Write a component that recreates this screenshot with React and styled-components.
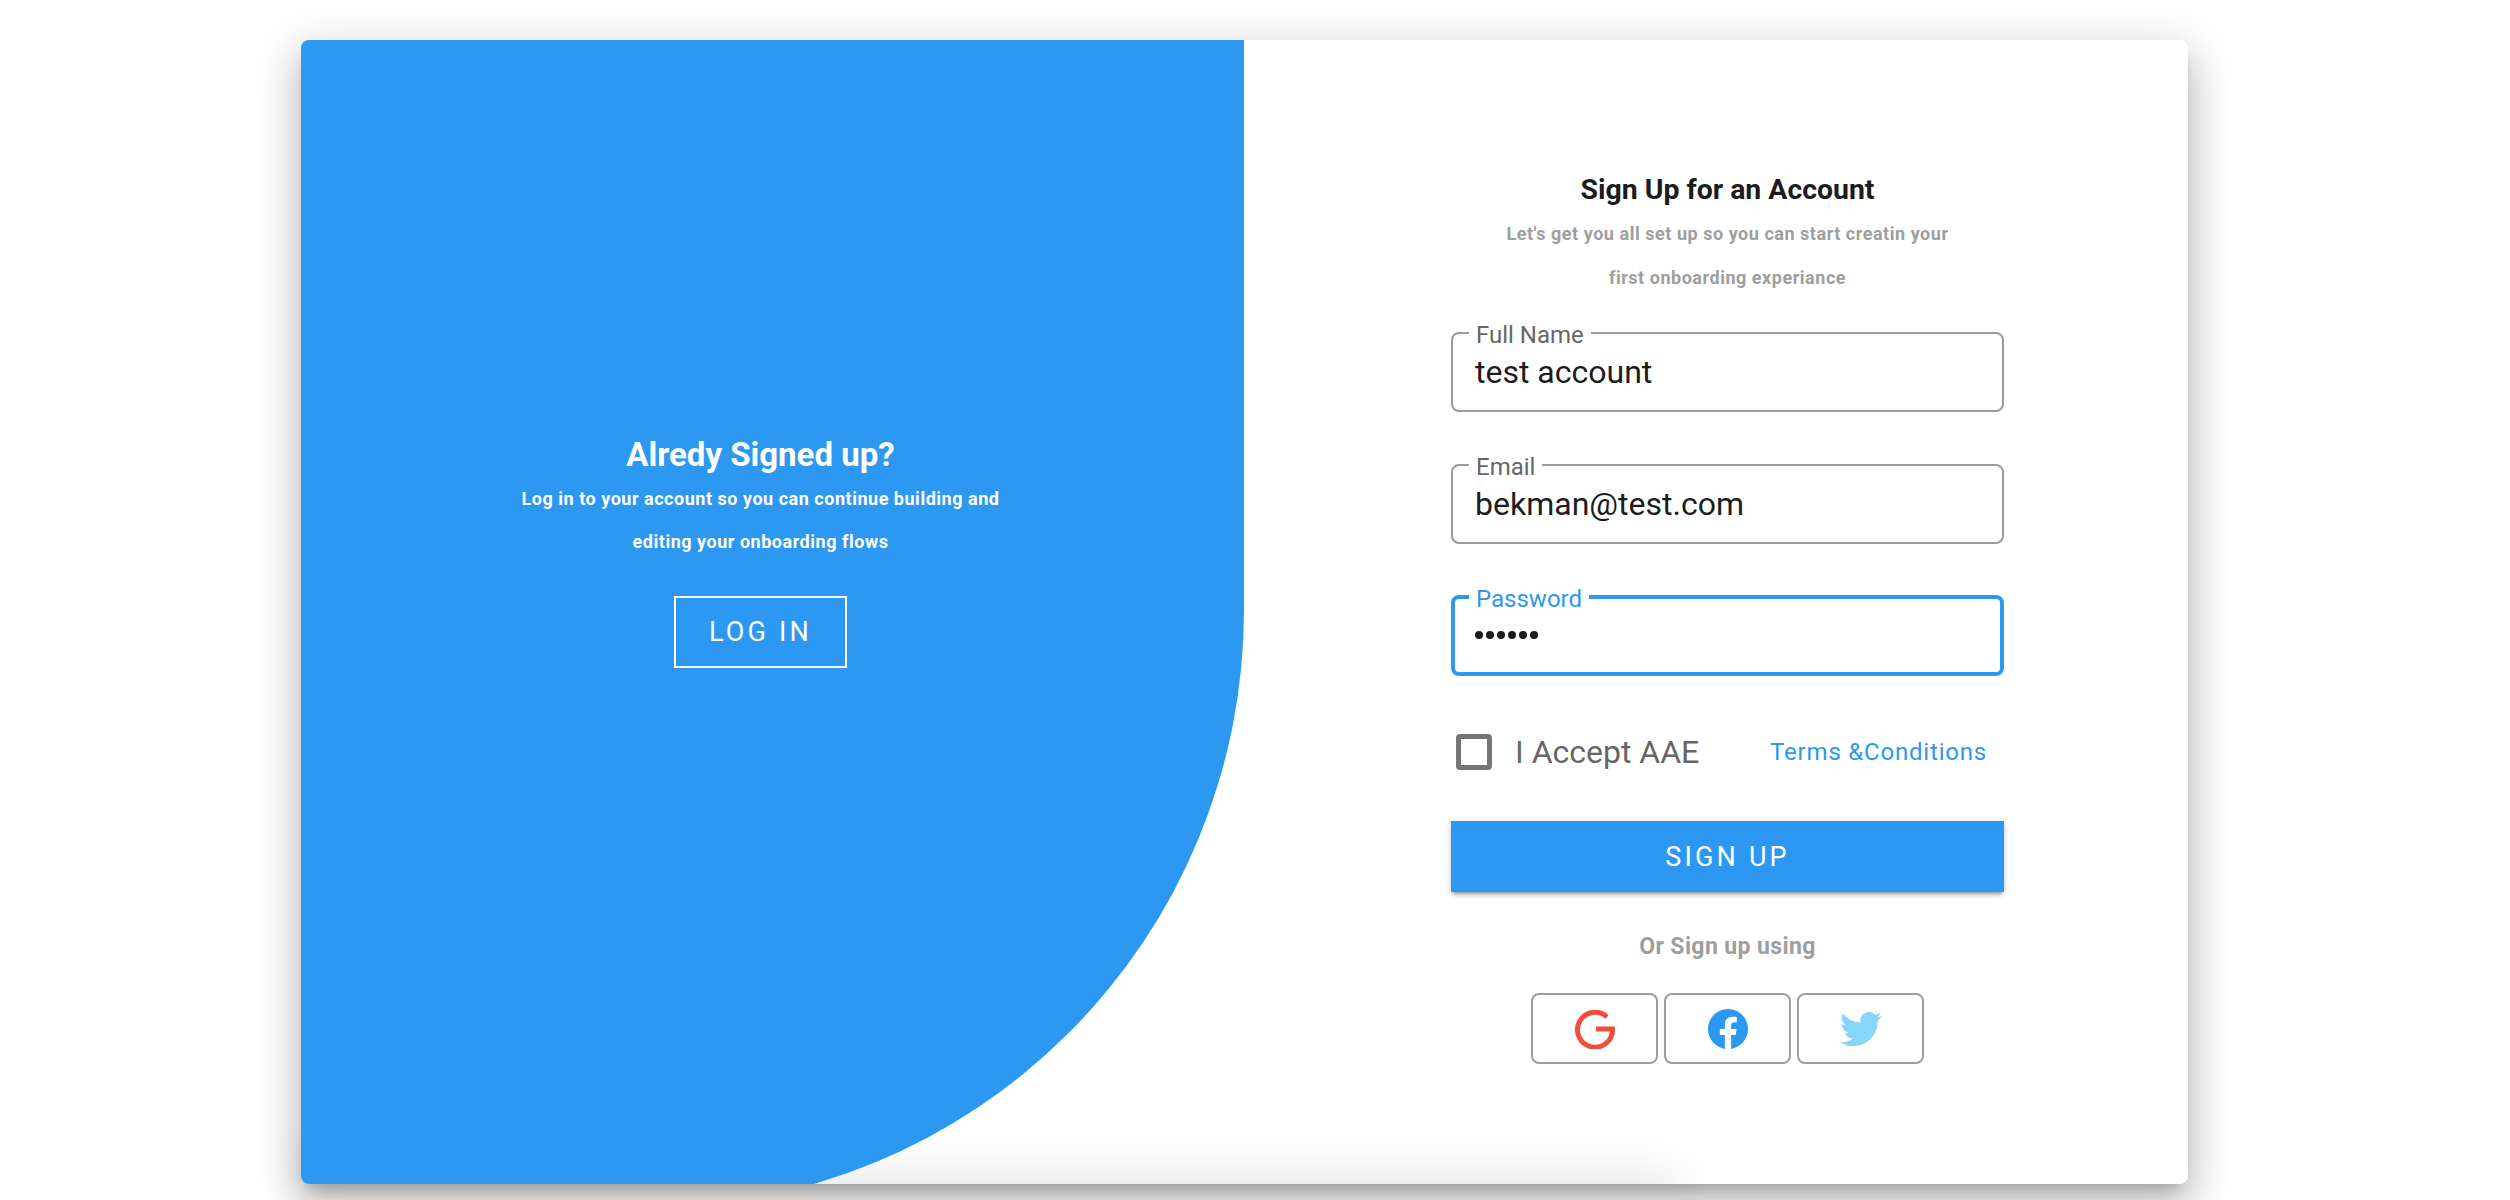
import React from 'react';
import styled, { createGlobalStyle } from 'styled-components';

const Global = createGlobalStyle`
  html, body { margin: 0; padding: 0; background: #fff; }
  body { font-family: Roboto, "Liberation Sans", sans-serif; height: 1200px; overflow: hidden; }
  * { box-sizing: border-box; }
`;

const BLUE = '#2d98f1';

const Page = styled.div`
  width: 2510px;
  height: 1200px;
  padding: 40px 322px 16px 301px;
`;

const CardFrame = styled.div`
  position: relative;
  z-index: 0;
`;

const OuterShade = styled.div`
  position: absolute;
  z-index: -1;
  left: 0;
  bottom: 0;
  width: 1390px;
  height: 40px;
  box-shadow: 0 0 30px rgba(0,0,0,.09);
`;

const Card = styled.main`
  position: relative;
  display: flex;
  align-items: flex-start;
  width: 1887px;
  height: 1144px;
  border-radius: 8px;
  background: #fff;
  overflow: hidden;
  box-shadow: 0 11px 15px -7px rgba(0,0,0,.2), 0 24px 38px 3px rgba(0,0,0,.14), 0 9px 46px 8px rgba(0,0,0,.12);
`;

const InnerShade = styled.div`
  position: absolute;
  left: 0;
  top: 100%;
  width: 1365px;
  height: 40px;
  box-shadow: 0 0 50px 10px rgba(0,0,0,.1);
`;

const Banner = styled.section`
  position: relative;
  z-index: 1;
  flex: 0 0 943px;
  height: 1168px;
  display: flex;
  flex-direction: column;
  align-items: center;
  padding: 395px 24px 0 0;
  background: ${BLUE};
  color: #fff;
  border-bottom-right-radius: 598px;
`;

const BannerTitle = styled.h2`
  margin: 0;
  font-size: 33px;
  line-height: 40px;
  font-weight: 700;
`;

const BannerText = styled.p`
  margin: 1.5px 0 0;
  font-size: 18px;
  line-height: 43.5px;
  font-weight: 700;
  letter-spacing: .52px;
  text-align: center;
`;

const OutlineButton = styled.button`
  margin-top: 32.5px;
  width: 173px;
  height: 72px;
  border: 2px solid #fff;
  background: transparent;
  color: #fff;
  font: 400 27px Roboto, sans-serif;
  letter-spacing: 3.2px;
`;

const FormPanel = styled.section`
  position: relative;
  z-index: 1;
  flex: 1;
  display: flex;
  flex-direction: column;
  align-items: center;
  padding: 130px 0 0 23px;
`;

const Form = styled.form`
  width: 553px;
  display: flex;
  flex-direction: column;
`;

const Title = styled.h1`
  margin: 0;
  font-size: 28.4px;
  line-height: 40px;
  font-weight: 700;
  color: #1c1c1c;
  text-align: center;
`;

const Sub = styled.p`
  margin: 2px 0 19px;
  font-size: 18px;
  line-height: 44px;
  font-weight: 700;
  letter-spacing: .53px;
  color: #9e9e9e;
  text-align: center;
`;

const Field = styled.fieldset`
  margin: 0 0 ${p => p.$gap}px;
  min-width: 0;
  height: 93px;
  padding: 0 ${p => (p.$focused ? 20 : 22)}px;
  border: ${p => (p.$focused ? `4px solid ${BLUE}` : '2px solid #9b9b9b')};
  border-radius: 8px;
  background: transparent;
`;

const Legend = styled.legend`
  margin-left: -6px;
  padding: 4px 7px 0;
  font-size: 24px;
  line-height: 24px;
  color: ${p => (p.$focused ? BLUE : '#666')};
`;

const Value = styled.div`
  margin-top: 6px;
  font-size: 32px;
  line-height: 38px;
  color: #1c1c1c;
`;

const Dots = styled.div`
  margin-top: 5px;
  display: flex;
  gap: 3px;
  height: 38px;
  align-items: center;
`;

const Dot = styled.span`
  width: 8px;
  height: 8px;
  border-radius: 50%;
  background: #1c1c1c;
`;

const AcceptRow = styled.div`
  display: flex;
  align-items: center;
  justify-content: space-between;
  height: 38px;
  margin-bottom: 50px;
  padding: 0 17px 0 5px;
`;

const AcceptLabel = styled.label`
  display: flex;
  align-items: center;
  gap: 23px;
  font-size: 32px;
  color: #666;
`;

const Box = styled.span`
  width: 36px;
  height: 36px;
  border: 5px solid #757575;
  border-radius: 4px;
`;

const TermsLink = styled.a`
  font-size: 24px;
  letter-spacing: .8px;
  color: ${BLUE};
`;

const PrimaryButton = styled.button`
  height: 71px;
  border: 0;
  background: ${BLUE};
  color: #fff;
  font: 400 27px Roboto, sans-serif;
  letter-spacing: 3.2px;
  box-shadow: 0 5px 2px -3px rgba(0,0,0,.2), 0 3px 4px 0 rgba(0,0,0,.14), 0 2px 8px 0 rgba(0,0,0,.12);
`;

const OrText = styled.p`
  margin: 35px 0 26px;
  font-size: 23px;
  line-height: 40px;
  font-weight: 700;
  letter-spacing: .4px;
  color: #9e9e9e;
  text-align: center;
`;

const SocialRow = styled.div`
  display: flex;
  justify-content: center;
  gap: 6px;
`;

const SocialButton = styled.button`
  width: 127px;
  height: 71px;
  display: flex;
  align-items: center;
  justify-content: center;
  padding: 0;
  border: 2px solid #9e9e9e;
  border-radius: 8px;
  background: #fff;
`;

const Icon = styled.svg`
  width: ${p => p.$size || 40}px;
  height: ${p => p.$size || 40}px;
  display: block;
`;

const GoogleIcon = () => (
  <Icon viewBox="0 0 24 24">
    <path fill="none" stroke="#f44b3f" strokeWidth="3" d="M19.2 4.8A10.5 10.5 0 1 0 22.5 12H12.6" />
  </Icon>
);

const FacebookIcon = () => (
  <Icon viewBox="0 0 24 24">
    <path fill={BLUE} d="M24 12.07C24 5.4 18.63 0 12 0S0 5.4 0 12.07c0 6.03 4.39 11.02 10.13 11.93v-8.44H7.08v-3.49h3.05V9.41c0-3.02 1.79-4.69 4.53-4.69 1.31 0 2.69.23 2.69.23v2.97h-1.51c-1.49 0-1.96.93-1.96 1.88v2.27h3.33l-.53 3.49h-2.8V24C19.61 23.09 24 18.1 24 12.07z" />
  </Icon>
);

const TwitterIcon = () => (
  <Icon viewBox="0 0 24 24" $size={42}>
    <path fill="#88d5fb" d="M24 4.56a9.83 9.83 0 0 1-2.83.78 4.93 4.93 0 0 0 2.17-2.72 9.87 9.87 0 0 1-3.13 1.19 4.92 4.92 0 0 0-8.39 4.49A13.98 13.98 0 0 1 1.67 3.15a4.92 4.92 0 0 0 1.52 6.57 4.9 4.9 0 0 1-2.23-.62v.06a4.93 4.93 0 0 0 3.95 4.83 4.94 4.94 0 0 1-2.22.08 4.93 4.93 0 0 0 4.6 3.42A9.88 9.88 0 0 1 0 19.54a13.94 13.94 0 0 0 7.55 2.21c9.05 0 14-7.5 14-14 0-.21 0-.42-.02-.63A10 10 0 0 0 24 4.56z" />
  </Icon>
);

const fields = [
  { label: 'Full Name', value: 'test account' },
  { label: 'Email', value: 'bekman@test.com' },
];

export default function App() {
  return (
    <>
      <Global />
      <Page>
        <CardFrame>
          <OuterShade />
          <Card>
            <InnerShade />
            <Banner>
              <BannerTitle>Alredy Signed up?</BannerTitle>
              <BannerText>Log in to your account so you can continue building and<br />editing your onboarding flows</BannerText>
              <OutlineButton>LOG IN</OutlineButton>
            </Banner>
            <FormPanel>
              <Form>
                <Title>Sign Up for an Account</Title>
                <Sub>Let's get you all set up so you can start creatin your<br />first onboarding experiance</Sub>
                {fields.map(f => (
                  <Field key={f.label} $gap={39}>
                    <Legend>{f.label}</Legend>
                    <Value>{f.value}</Value>
                  </Field>
                ))}
                <Field $focused $gap={57}>
                  <Legend $focused>Password</Legend>
                  <Dots>{[0, 1, 2, 3, 4, 5].map(i => <Dot key={i} />)}</Dots>
                </Field>
                <AcceptRow>
                  <AcceptLabel><Box />I Accept AAE</AcceptLabel>
                  <TermsLink>Terms &amp;Conditions</TermsLink>
                </AcceptRow>
                <PrimaryButton type="button">SIGN UP</PrimaryButton>
                <OrText>Or Sign up using</OrText>
                <SocialRow>
                  <SocialButton type="button"><GoogleIcon /></SocialButton>
                  <SocialButton type="button"><FacebookIcon /></SocialButton>
                  <SocialButton type="button"><TwitterIcon /></SocialButton>
                </SocialRow>
              </Form>
            </FormPanel>
          </Card>
        </CardFrame>
      </Page>
    </>
  );
}
